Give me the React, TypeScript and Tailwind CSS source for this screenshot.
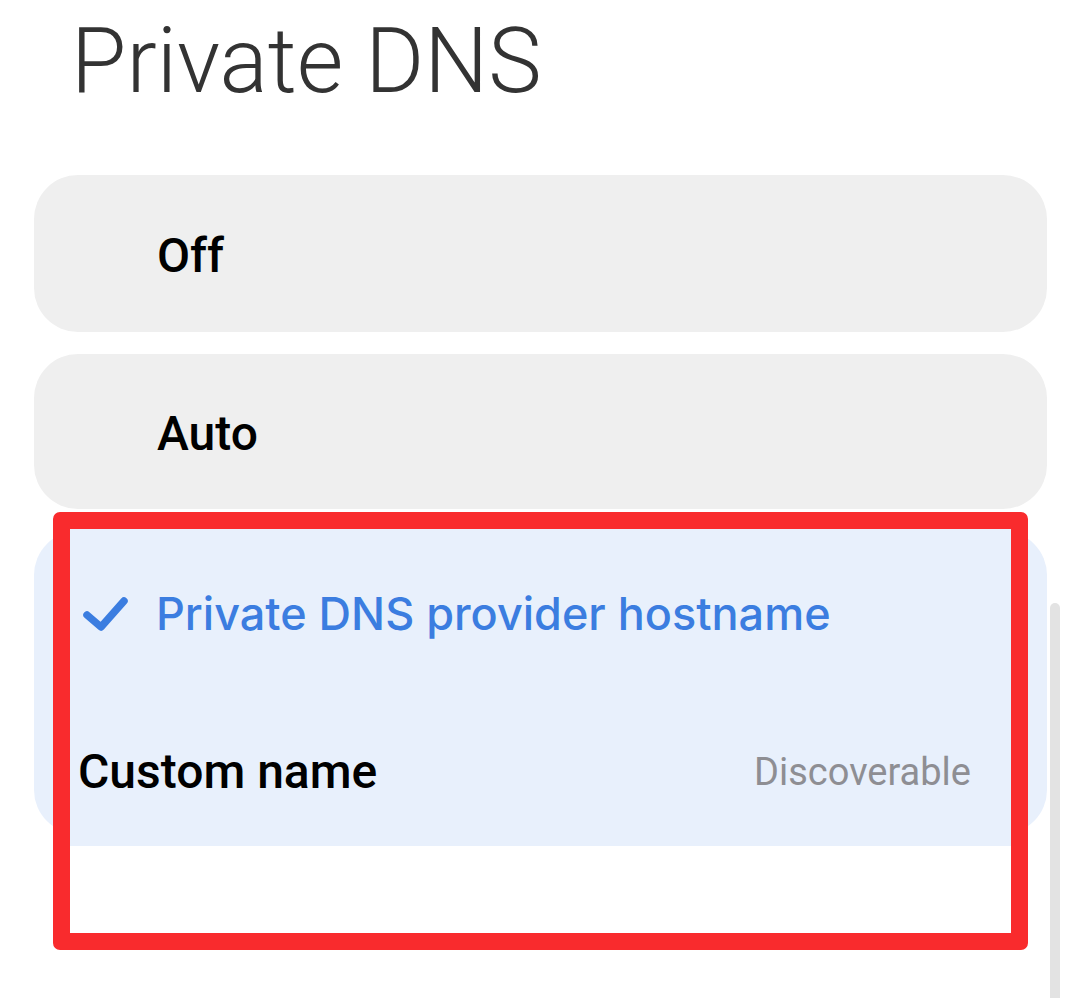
import React from "react";

export default function App() {
  return (
    <div
      className="relative w-[1080px] h-[998px] overflow-hidden bg-white"
      style={{ fontFamily: "Roboto, 'Noto Sans', sans-serif" }}
    >
      <div className="pl-[71px] pt-[17px]">
        <h1 className="text-[90px] leading-none font-light text-[#333333]">
          Private DNS
        </h1>
      </div>

      <div className="relative mt-[68px] pl-[34px] pr-[33px] flex flex-col gap-[22px]">
        <div className="h-[157px] rounded-[44px] bg-[#efefef] flex items-center pl-[123px] pt-[5px]">
          <span className="text-[48px] leading-none font-medium text-black">Off</span>
        </div>
        <div className="h-[155px] rounded-[44px] bg-[#efefef] flex items-center pl-[123px] pt-[5px]">
          <span className="text-[48px] leading-none font-medium text-black">Auto</span>
        </div>
        <div className="h-[303px] rounded-[44px] bg-[#e8f0fc] pl-[44px] pr-[76px] pt-[60px] pb-[38px] flex flex-col">
          <div className="relative z-10 h-[45px] flex items-center">
            <svg width="48" height="38" viewBox="0 0 48 38" className="ml-[3px] shrink-0">
              <polyline
                points="6,20 20,32 43,6"
                fill="none"
                stroke="#3b7de0"
                strokeWidth="7.5"
                strokeLinecap="round"
                strokeLinejoin="round"
              />
            </svg>
            <span
              className="ml-[27px] text-[45px] leading-none font-medium text-[#3b7de0]"
              style={{ fontFamily: "Inter, Roboto, sans-serif" }}
            >
              Private DNS provider hostname
            </span>
          </div>
          <div className="relative z-10 mt-[112px] h-[48px] flex items-center justify-between">
            <span className="text-[48px] leading-none font-medium text-black">Custom name</span>
            <span className="text-[38px] leading-none font-normal text-[#8e8e93]">Discoverable</span>
          </div>
        </div>
      </div>

      {/* annotation box */}
      <div className="absolute left-[53px] top-[512px] w-[975px] h-[438px] rounded-[7px] border-[17px] border-[#f92b2d] bg-white overflow-hidden">
        <div className="h-[317px] bg-[#e8f0fc]" />
      </div>

      {/* scrollbar */}
      <div className="absolute left-[1050px] top-[603px] w-[10px] h-[420px] rounded-full bg-[#e3e3e3]" />
    </div>
  );
}
